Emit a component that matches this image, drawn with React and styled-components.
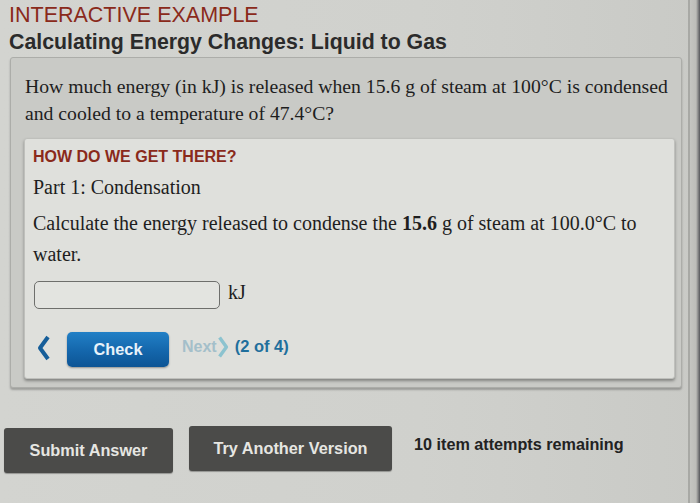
import React from "react";
import styled, { createGlobalStyle } from "styled-components";

const Global = createGlobalStyle`
  html, body { margin: 0; padding: 0; background: #cfd0cc; }
  body { width: 700px; height: 503px; overflow: hidden; }
`;

const Screen = styled.div`
  display: flex;
  width: 700px;
  height: 503px;
  background: linear-gradient(90deg, #d3d4d0 0%, #d0d1cd 60%, #c9cac6 100%);
`;

const Page = styled.div`
  width: 690px;
  height: 503px;
  border-right: 2px solid #a8a9a5;
  box-sizing: border-box;
  display: flex;
  flex-direction: column;
`;

const EdgeStrip = styled.div`
  flex: 1;
  background: linear-gradient(90deg, #c4c5c1 0%, #bdbdb9 60%, #55565a 100%);
`;

const Kicker = styled.div`
  font-family: "Liberation Sans", Arial, sans-serif;
  font-size: 21.5px;
  color: #8a2a1b;
  padding: 3px 0 0 9px;
  line-height: 24px;
`;

const Title = styled.h1`
  margin: 3px 0 0 9px;
  font-family: "Liberation Sans", Arial, sans-serif;
  font-size: 21.3px;
  font-weight: bold;
  color: #2b2b2b;
  line-height: 24px;
`;

const OuterCard = styled.div`
  margin: 3px 6px 0 10px;
  background: #c9cac6;
  border: 1px solid #acada9;
  border-radius: 3px;
  padding: 15px 6px 8px 13px;
  box-shadow: 0 2px 2px rgba(0, 0, 0, 0.25);
`;

const Question = styled.p`
  margin: 0 -6px 0 1px;
  font-family: "Liberation Serif", "Times New Roman", serif;
  font-size: 19.7px;
  line-height: 27px;
  color: #1e1e1e;
`;

const InnerCard = styled.div`
  margin-top: 11px;
  background: #dfe0dc;
  border: 1px solid #bfc0bc;
  border-radius: 3px;
  padding: 7px 8px 11px 8px;
  box-shadow: 0 2px 3px rgba(0, 0, 0, 0.35);
`;

const HowLabel = styled.div`
  font-family: "Liberation Sans", Arial, sans-serif;
  font-weight: bold;
  font-size: 16px;
  color: #8a2a1b;
  line-height: 20px;
  padding-top: 1px;
`;

const Part = styled.div`
  margin-top: 8px;
  font-family: "Liberation Serif", "Times New Roman", serif;
  font-size: 20px;
  color: #1e1e1e;
  line-height: 24px;
`;

const Body = styled.p`
  margin: 9px 0 0 0;
  font-family: "Liberation Serif", "Times New Roman", serif;
  font-size: 20px;
  line-height: 31px;
  color: #1e1e1e;
  b { font-weight: bold; }
`;

const AnswerRow = styled.div`
  display: flex;
  align-items: center;
  gap: 8px;
  margin-top: 11px;
  padding-left: 1px;
`;

const Input = styled.input`
  width: 186px;
  height: 28px;
  box-sizing: border-box;
  border: 1.5px solid #6e6f6c;
  border-radius: 5px;
  background: #e3e4e0;
`;

const Unit = styled.span`
  font-family: "Liberation Serif", "Times New Roman", serif;
  font-size: 20px;
  color: #1e1e1e;
  margin-top: -6px;
`;

const NavRow = styled.div`
  display: flex;
  align-items: center;
  margin-top: 23px;
  padding-left: 4px;
`;

const CheckButton = styled.button`
  margin-left: 16px;
  width: 102px;
  height: 35px;
  border: none;
  border-radius: 5px;
  background: linear-gradient(180deg, #2280c6 0%, #1466ab 55%, #0d5595 100%);
  box-shadow: 0 1px 2px rgba(0, 0, 0, 0.35);
  color: #e8f2fa;
  font-family: "Liberation Sans", Arial, sans-serif;
  font-weight: bold;
  font-size: 16.3px;
`;

const NextText = styled.span`
  margin-left: 13px;
  margin-top: -6px;
  font-family: "Liberation Sans", Arial, sans-serif;
  font-weight: bold;
  font-size: 16px;
  color: #a4bfca;
`;

const Count = styled.span`
  margin-left: 6px;
  margin-top: -6px;
  font-family: "Liberation Sans", Arial, sans-serif;
  font-weight: bold;
  font-size: 16.5px;
  color: #1f6f9c;
`;

const ChevronBox = styled.span`
  display: flex;
  margin-top: ${(p) => p.$shift}px;
`;

const Chevron = ({ dir, color, w = 14, h = 26, shift = 0 }) => (
  <ChevronBox $shift={shift}>
    <svg width={w} height={h} viewBox="0 0 14 26">
      {dir === "left" ? (
        <path d="M11 2 L3 13 L11 24" fill="none" stroke={color} strokeWidth="4" strokeLinejoin="round" />
      ) : (
        <path d="M3 2 L11 13 L3 24" fill="none" stroke={color} strokeWidth="4" strokeLinejoin="round" />
      )}
    </svg>
  </ChevronBox>
);

const Footer = styled.div`
  display: flex;
  align-items: center;
  gap: 16px;
  margin-top: 36px;
  padding-left: 4px;
`;

const DarkButton = styled.button`
  height: 45px;
  width: ${(p) => p.$w}px;
  border: none;
  border-radius: 3px;
  background: #4b4b49;
  color: #e6e6e2;
  font-family: "Liberation Sans", Arial, sans-serif;
  font-weight: bold;
  font-size: 16.3px;
  margin-top: ${(p) => p.$shift}px;
  box-shadow: 0 1px 1px rgba(0, 0, 0, 0.3);
`;

const Attempts = styled.span`
  margin-left: 6px;
  margin-top: -8px;
  font-family: "Liberation Sans", Arial, sans-serif;
  font-weight: bold;
  font-size: 16.2px;
  color: #222;
`;

export default function App() {
  return (
    <>
      <Global />
      <Screen>
        <Page>
          <Kicker>INTERACTIVE EXAMPLE</Kicker>
          <Title>Calculating Energy Changes: Liquid to Gas</Title>
          <OuterCard>
            <Question>
              How much energy (in kJ) is released when 15.6 g of steam at 100°C is condensed and cooled to a temperature of 47.4°C?
            </Question>
            <InnerCard>
              <HowLabel>HOW DO WE GET THERE?</HowLabel>
              <Part>Part 1: Condensation</Part>
              <Body>
                Calculate the energy released to condense the <b>15.6</b> g of steam at 100.0°C to water.
              </Body>
              <AnswerRow>
                <Input type="text" />
                <Unit>kJ</Unit>
              </AnswerRow>
              <NavRow>
                <Chevron dir="left" color="#165e99" shift={-4} />
                <CheckButton>Check</CheckButton>
                <NextText>Next</NextText>
                <Chevron dir="right" color="#8cc3cf" w={12} h={24} shift={-6} />
                <Count>(2 of 4)</Count>
              </NavRow>
            </InnerCard>
          </OuterCard>
          <Footer>
            <DarkButton $w={169} $shift={4}>Submit Answer</DarkButton>
            <DarkButton $w={203} $shift={0}>Try Another Version</DarkButton>
            <Attempts>10 item attempts remaining</Attempts>
          </Footer>
        </Page>
        <EdgeStrip />
      </Screen>
    </>
  );
}
